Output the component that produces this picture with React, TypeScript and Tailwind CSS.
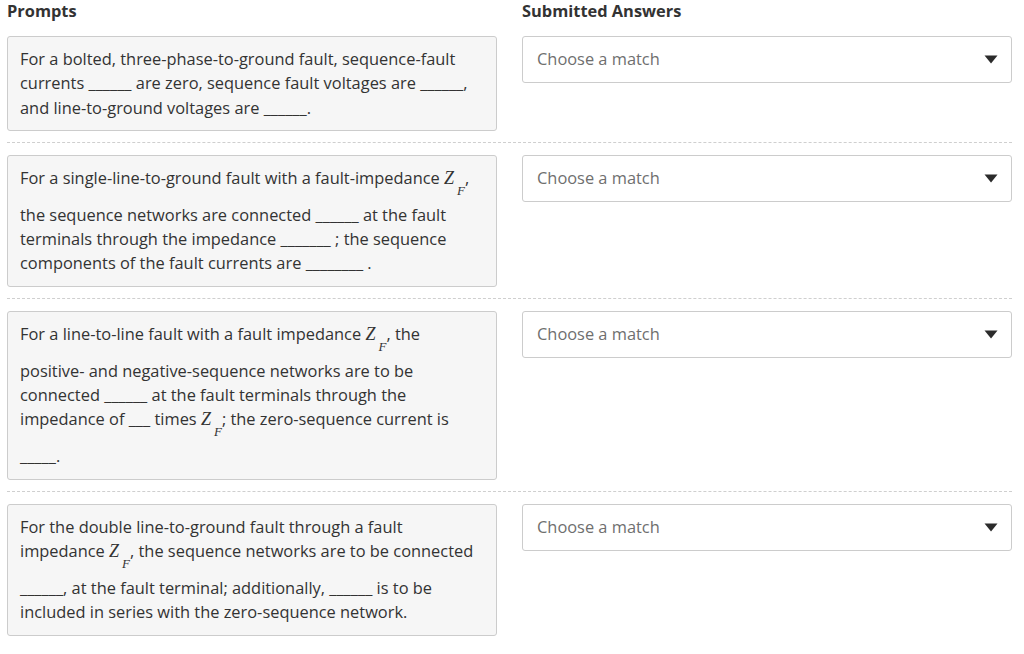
import React from 'react';

// Z with a lowered subscript F, set like the MathJax output in the prompts
function ZF() {
  return (
    <span className="whitespace-nowrap">
      <span className="font-['Liberation_Serif',serif] italic text-[18px]">Z</span>
      <span className="inline-block align-[-11px] pl-[3px] pb-[6px] font-['Liberation_Serif',serif] italic text-[13px] leading-none">F</span>
    </span>
  );
}

function Blank({ n }: { n: number }) {
  return <>{'_'.repeat(n)}</>;
}

function Select() {
  return (
    <div className="flex h-[47px] items-center justify-between rounded-[3px] border border-[#cccccc] bg-white pl-[14px] pr-[14px]">
      <span className="text-[16.4px] text-[#6f6f6f]">Choose a match</span>
      <svg width="14" height="9" viewBox="0 0 14 9" className="mr-[-1px]">
        <path d="M0.5 0.5 L13.5 0.5 L7 8.5 Z" fill="#2b2b2b" />
      </svg>
    </div>
  );
}

const prompts: React.ReactNode[] = [
  <>
    For a bolted, three-phase-to-ground fault, sequence-fault currents <Blank n={6} /> are zero, sequence fault
    voltages are <Blank n={6} />, and line-to-ground voltages are <Blank n={6} />.
  </>,
  <>
    For a single-line-to-ground fault with a fault-impedance <ZF />, the sequence networks are connected{' '}
    <Blank n={6} /> at the fault terminals through the impedance <Blank n={7} /> ; the sequence components of the
    fault currents are <Blank n={8} /> .
  </>,
  <>
    For a line-to-line fault with a fault impedance <ZF />, the positive- and negative-sequence networks are to be
    connected <Blank n={6} /> at the fault terminals through the impedance of <Blank n={3} /> times <ZF />; the
    zero-sequence current is <Blank n={5} />.
  </>,
  <>
    For the double line-to-ground fault through a fault impedance <ZF />, the sequence networks are to be connected{' '}
    <Blank n={6} />, at the fault terminal; additionally, <Blank n={6} /> is to be included in series with the
    zero-sequence network.
  </>,
];

export default function App() {
  return (
    <div className="min-h-[654px] bg-white pl-[7px] pr-[12px] font-['Open_Sans','Noto_Sans',sans-serif] text-[#333333]">
      {/* Column headers */}
      <div className="flex h-[23px] items-center gap-[25px] mb-[13px]">
        <div className="w-[490px] text-[16.4px] font-bold">Prompts</div>
        <div className="w-[490px] text-[16.4px] font-bold">Submitted Answers</div>
      </div>

      {prompts.map((p, i) => (
        <div
          key={i}
          className={
            i < prompts.length - 1
              ? 'flex items-start gap-[25px] pb-[11px] mb-[12px] border-b border-dashed border-[#cfcfcf]'
              : 'flex items-start gap-[25px]'
          }
        >
          <div className="w-[490px] rounded-[3px] border border-[#cccccc] bg-[#f6f6f6] px-[12px] py-[10px] text-[16.4px] leading-[24.3px]">
            {p}
          </div>
          <div className="w-[490px]">
            <Select />
          </div>
        </div>
      ))}
    </div>
  );
}
